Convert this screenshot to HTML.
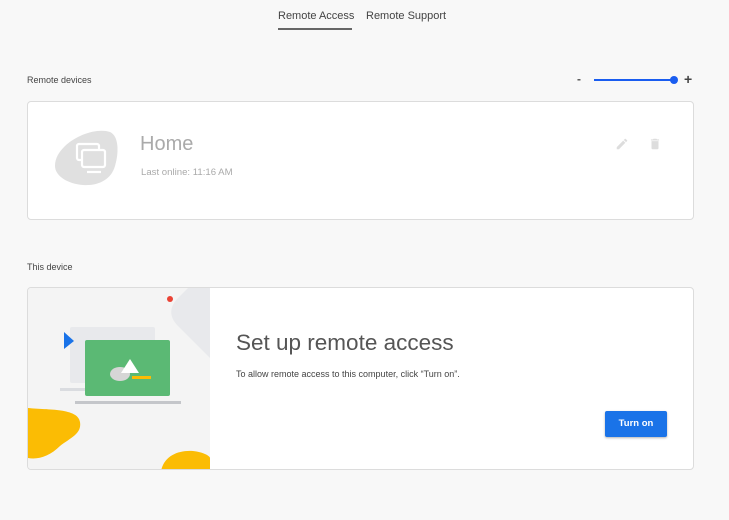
<!DOCTYPE html>
<html><head><meta charset="utf-8"><style>
*{margin:0;padding:0;box-sizing:border-box}
body{width:729px;height:520px;background:#f8f8f8;font-family:"Liberation Sans",sans-serif;position:relative;overflow:hidden;color:#333}
.a{position:absolute}
.card{position:absolute;background:#fff;border:1px solid #dcdcdc;border-radius:4px}
</style></head><body>
<div class="a" style="left:278px;top:10px;font-size:11px;color:#444">Remote Access</div>
<div class="a" style="left:278px;top:28px;width:74px;height:2px;background:#666"></div>
<div class="a" style="left:366px;top:10px;font-size:11px;color:#444">Remote Support</div>

<div class="a" style="left:27px;top:75px;font-size:9px;color:#444">Remote devices</div>
<div class="a" style="left:577px;top:72px;font-size:12px;color:#555;font-weight:bold">-</div>
<div class="a" style="left:594px;top:79px;width:80px;height:2px;background:#1a5df0"></div>
<div class="a" style="left:670px;top:76px;width:8px;height:8px;border-radius:50%;background:#1a5df0"></div>
<div class="a" style="left:684px;top:71px;font-size:14px;color:#444;font-weight:bold">+</div>

<div class="card" style="left:27px;top:101px;width:667px;height:119px">
<svg class="a" style="left:25px;top:26px" width="70" height="60" viewBox="0 0 70 60">
<path d="M12 18 C25 6 45 0 57 4 C66 8 66 25 62 38 C58 52 45 58 30 57 C15 56 2 48 2 38 C2 30 6 24 12 18Z" fill="#e0e0e0"/>
<g fill="none" stroke="#fff" stroke-width="2.2"><rect x="24" y="16" width="22" height="16" rx="2"/><rect x="29" y="22" width="23" height="17" rx="2" fill="#e0e0e0"/><path d="M34 44h14"/></g>
</svg>
<div class="a" style="left:112px;top:31px;font-size:20px;color:#aaa">Home</div>
<div class="a" style="left:113px;top:65px;font-size:9.6px;color:#aaa">Last online: 11:16 AM</div>
<svg class="a" style="left:587px;top:35px" width="14" height="14" viewBox="0 0 24 24"><path fill="#ddd" d="M3 17.25V21h3.75L17.8 9.94l-3.75-3.75L3 17.25zM20.7 7.04a1 1 0 000-1.41l-2.34-2.34a1 1 0 00-1.41 0l-1.83 1.830 3.75 3.75 1.83-1.83z"/></svg>
<svg class="a" style="left:620px;top:35px" width="14" height="14" viewBox="0 0 24 24"><path fill="#ddd" d="M6 19a2 2 0 002 2h8a2 2 0 002-2V7H6v12zM19 4h-3.5l-1-1h-5l-1 1H5v2h14V4z"/></svg>
</div>

<div class="a" style="left:27px;top:262px;font-size:9px;color:#444">This device</div>
<div class="card" style="left:27px;top:287px;width:667px;height:183px;overflow:hidden">
<svg class="a" style="left:0;top:0" width="182" height="183" viewBox="0 0 182 183">
<rect width="182" height="183" fill="#f4f4f4"/>
<path d="M160 0 L182 0 L182 70 L150 38 C140 28 142 18 150 10Z" fill="#e8e9ec"/>
<circle cx="142" cy="11" r="3" fill="#ea4335"/>
<rect x="42" y="39" width="85" height="56" rx="2" fill="#e8e9ec"/>
<rect x="32" y="100" width="45" height="3" fill="#dadce0"/>
<path d="M36 44 L46 53 L36 61Z" fill="#1a73e8"/>
<rect x="57" y="52" width="85" height="56" rx="2" fill="#5bb974"/>
<rect x="47" y="113" width="106" height="3" fill="#c4c6ca"/>
<ellipse cx="92" cy="86" rx="10" ry="7" fill="#d6d6d6"/>
<path d="M102 71 L111 85 L93 85Z" fill="#fff"/>
<rect x="104" y="88" width="19" height="3" fill="#fbbc04"/>
<path d="M0 120 C20 122 50 120 52 134 C54 146 42 150 32 158 C22 168 10 172 0 170Z" fill="#fbbc04"/>
<path d="M133 183 C136 168 150 162 165 163 C175 164 182 168 182 170 L182 183Z" fill="#fbbc04"/>
</svg>
<div class="a" style="left:208px;top:42px;font-size:22.5px;color:#555">Set up remote access</div>
<div class="a" style="left:208px;top:81px;font-size:9px;color:#444">To allow remote access to this computer, click “Turn on”.</div>
<div class="a" style="left:577px;top:123px;width:62px;height:26px;background:#1a73e8;border-radius:2px;color:#fff;font-size:9.5px;font-weight:bold;text-align:center;line-height:26px;box-shadow:0 1px 2px rgba(0,0,0,.3)">Turn on</div>
</div>
</body></html>
